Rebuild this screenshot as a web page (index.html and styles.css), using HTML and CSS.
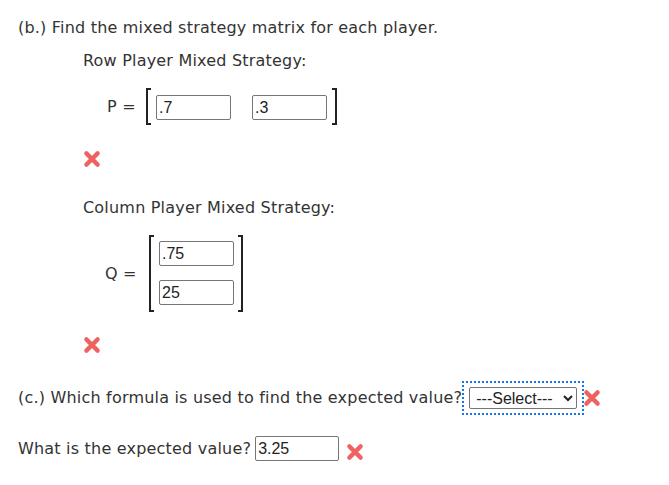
FILE: index.html
```html
<!DOCTYPE html>
<html>
<head>
<meta charset="utf-8">
<link rel="stylesheet" href="styles.css">
</head>
<body>
<div class="page">
  <div class="q">(b.) Find the mixed strategy matrix for each player.</div>
  <div class="sub">
    <div class="label">Row Player Mixed Strategy:</div>
    <div class="matrix mrow">
      <span class="eq">P =</span>
      <div class="brackets hb">
        <input class="cell" type="text" value=".7">
        <input class="cell" type="text" value=".3">
      </div>
    </div>
    <div class="mark m1"><svg class="x" viewBox="0 0 16 16"><path d="M3 3L13 13M13 3L3 13"/></svg></div>
    <div class="label l2">Column Player Mixed Strategy:</div>
    <div class="matrix mcol">
      <span class="eq">Q =</span>
      <div class="brackets vb">
        <input class="cell" type="text" value=".75">
        <input class="cell" type="text" value="25">
      </div>
    </div>
    <div class="mark m2"><svg class="x" viewBox="0 0 16 16"><path d="M3 3L13 13M13 3L3 13"/></svg></div>
  </div>
  <div class="q qc"><span>(c.) Which formula is used to find the expected value?</span><span class="focus"><select class="sel"><option>---Select---</option></select></span><svg class="x xs" viewBox="0 0 16 16"><path d="M3 3L13 13M13 3L3 13"/></svg></div>
  <div class="q qd"><span>What is the expected value?</span><input class="cell ev" type="text" value="3.25"><svg class="x xe" viewBox="0 0 16 16"><path d="M3 3L13 13M13 3L3 13"/></svg></div>
</div>
</body>
</html>
```
FILE: styles.css
```css
html, body { margin: 0; padding: 0; background: #fff; }
body { font-family: "DejaVu Sans", Verdana, sans-serif; font-size: 16px; letter-spacing: 0.2px; color: #333; }
.page { padding: 18px 0 0 18px; }
.q { line-height: 20px; }
.sub { padding-left: 65px; }
.label { margin-top: 13px; line-height: 20px; }
.l2 { margin-top: 33px; }
.matrix { display: flex; align-items: center; }
.eq { display: inline-block; }
.mrow { margin-top: 17px; padding-left: 24px; }
.mrow .eq { width: 39px; }
.mcol { margin-top: 17px; padding-left: 22px; }
.mcol .eq { width: 44px; }
.brackets { position: relative; display: flex; }
.brackets::before, .brackets::after {
  content: ""; position: absolute; top: 0; bottom: 0; width: 3px;
  border: 2px solid #222;
}
.brackets::before { left: 0; border-right: none; }
.brackets::after { right: 0; border-left: none; }
.hb { padding: 7px 10px 5px 10px; gap: 21px; }
.vb { flex-direction: column; padding: 6px 9px 7px 10px; gap: 14px; }
.cell {
  font-family: "Liberation Sans", Arial, sans-serif; font-size: 16px; letter-spacing: 0; color: #222;
  width: 75px; height: 25px; box-sizing: border-box; margin: 0;
  border: 1px solid #767676; border-radius: 2px; padding: 1px 2px; background: #fff;
}
.mark { height: 17px; }
.m1 { margin-top: 23px; }
.m2 { margin-top: 22px; }
.x { width: 18px; height: 18px; display: inline-block; vertical-align: middle; }
.x path { stroke: #f06262; stroke-width: 3.8; stroke-linecap: round; fill: none; }
.qc { margin-top: 32px; display: flex; align-items: center; }
.focus { display: inline-block; outline: 2px dotted #1a73e8; outline-offset: 0; padding: 4px 5px; margin-left: 2px; }
.sel {
  font-family: "Liberation Sans", Arial, sans-serif; font-size: 16px; letter-spacing: 0; color: #222;
  height: 22px; width: 108px; border: 1px solid #767676; border-radius: 2px; background: #fff; padding: 0 2px;
  display: block;
}
.xs { margin-left: 1px; }
.qd { margin-top: 23px; display: flex; align-items: center; }
.ev { width: 84px; margin-left: 4px; }
.xe { margin-left: 7px; margin-top: 6px; }
```
